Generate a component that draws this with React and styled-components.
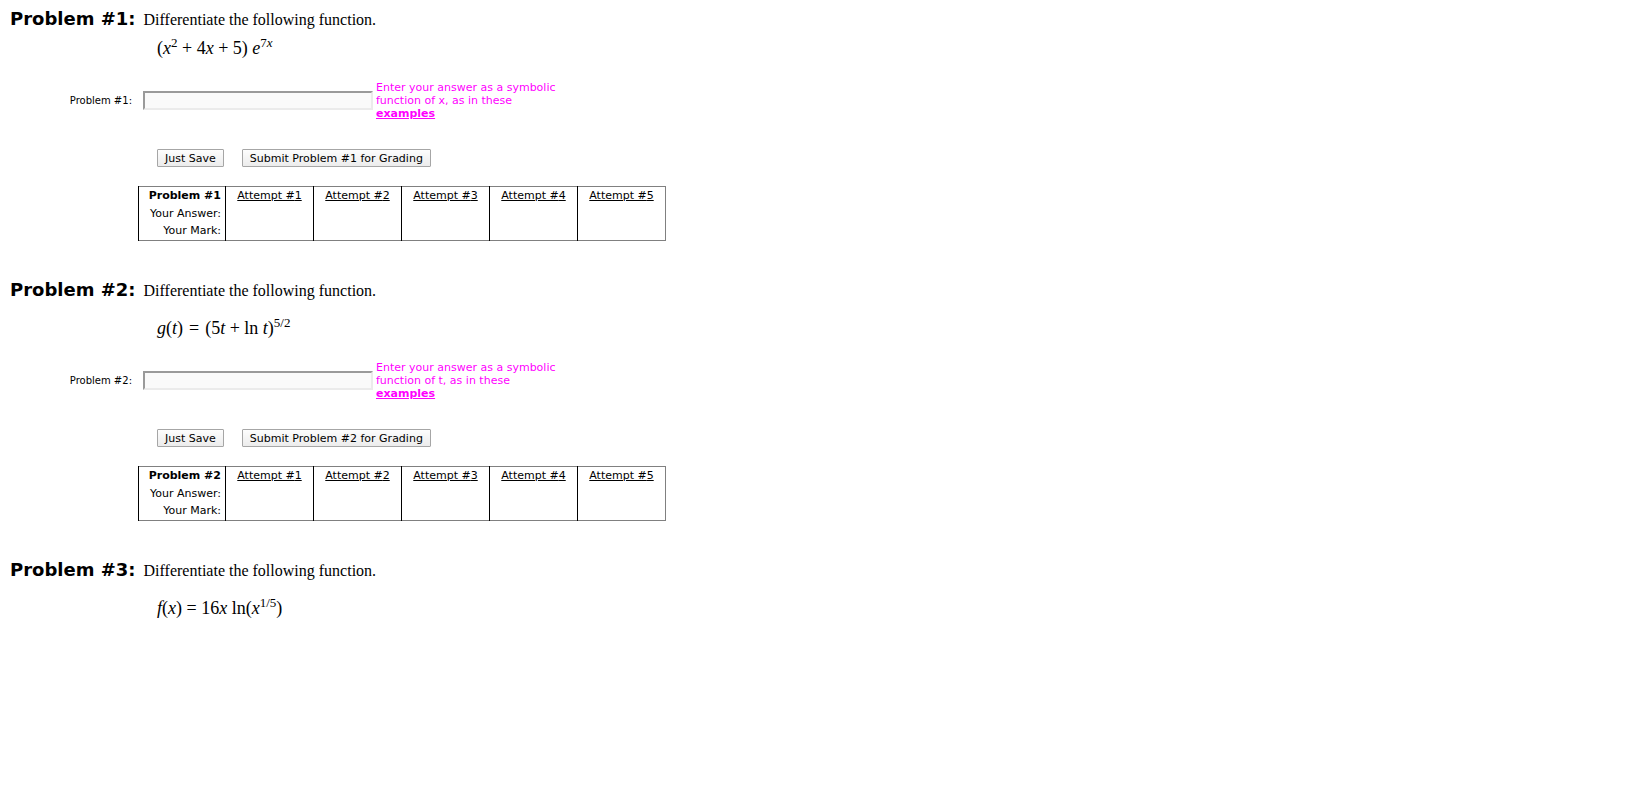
import React from 'react';
import styled, { createGlobalStyle } from 'styled-components';

const GlobalStyle = createGlobalStyle`
  body {
    margin: 0;
    background: #fff;
    color: #000;
    font-family: "DejaVu Sans", Verdana, sans-serif;
  }
`;

const Page = styled.div`
  padding-top: 8px;
`;

const Section = styled.section`
  margin-bottom: 38.5px;
`;

const Heading = styled.div`
  padding-left: 10px;
  height: 22px;
  line-height: 22px;
  white-space: nowrap;
`;

const Number = styled.b`
  font-family: "DejaVu Sans", Verdana, sans-serif;
  font-size: 18px;
  font-weight: bold;
`;

const Statement = styled.span`
  font-family: "Liberation Serif", "Times New Roman", serif;
  font-size: 16px;
  margin-left: 8px;
`;

const MathLine = styled.div`
  margin-top: ${(p) => p.$gap}px;
  padding-left: 157px;
  height: 22px;
  line-height: 22px;
  font-family: "Liberation Serif", "Times New Roman", serif;
  font-size: 18px;
  white-space: nowrap;

  i {
    font-style: italic;
  }

  sup {
    font-size: 13px;
    line-height: 0;
    vertical-align: 7px;
  }
`;

const Eq = styled.span`
  margin: 0 6px;
`;

const AnswerRow = styled.div`
  margin-top: 21px;
  display: flex;
  align-items: center;
  height: 40px;
`;

const Label = styled.label`
  width: 143px;
  padding-right: 11px;
  box-sizing: border-box;
  text-align: right;
  font-size: 10px;
`;

const AnswerInput = styled.input`
  width: 230px;
  height: 19px;
  box-sizing: border-box;
  margin: 0;
  padding: 0 3px;
  border: 2px solid #ebebeb;
  border-top-color: #9a9a9a;
  border-left-color: #9a9a9a;
  background: #fafafa;
  font-size: 11px;
`;

const Hint = styled.div`
  margin-left: 3px;
  width: 186px;
  color: #ff00ff;
  font-size: 11px;
  line-height: 13px;

  a {
    color: #ff00ff;
    font-weight: bold;
    text-decoration: underline;
  }
`;

const ButtonRow = styled.div`
  margin-top: 29px;
  padding-left: 157px;
  display: flex;
  gap: 18px;
`;

const Button = styled.button`
  height: 18px;
  margin: 0;
  padding: 0 7px;
  font-family: "DejaVu Sans", Verdana, sans-serif;
  font-size: 11px;
  line-height: 1;
  color: #000;
  background: linear-gradient(#fdfdfd, #ececec);
  border: 1px solid #a6a6a6;
  border-radius: 1px;
`;

const AttemptTable = styled.table`
  margin: 19px 0 0 138px;
  border-collapse: collapse;
  border: 1px solid #808080;
  font-size: 11px;

  td,
  th {
    height: 17.5px;
    padding: 0 4px;
    border-left: 1px solid #000;
    vertical-align: middle;
  }
`;

const RowHead = styled.th`
  width: 78px;
  text-align: right;
  font-weight: ${(p) => (p.$bold ? 'bold' : 'normal')};
  white-space: nowrap;
`;

const AttemptCell = styled.td`
  width: 79px;
  text-align: center;

  && {
    vertical-align: top;
    padding-top: 2px;
  }

  a {
    color: #000;
    text-decoration: underline;
  }
`;

const problems = [
  {
    id: 1,
    gap: 7,
    variable: 'x',
    math: (
      <>
        (<i>x</i><sup>2</sup> + 4<i>x</i> + 5) <i>e</i><sup>7<i>x</i></sup>
      </>
    ),
  },
  {
    id: 2,
    gap: 16,
    variable: 't',
    math: (
      <>
        <i>g</i>(<i>t</i>)<Eq>=</Eq>(5<i>t</i> + ln <i>t</i>)<sup>5/2</sup>
      </>
    ),
  },
  {
    id: 3,
    gap: 16,
    math: (
      <>
        <i>f</i>(<i>x</i>) = 16<i>x</i> ln(<i>x</i><sup>1/5</sup>)
      </>
    ),
  },
];

const attempts = [1, 2, 3, 4, 5];

const Problem = ({ problem }) => (
  <Section>
    <Heading>
      <Number>Problem #{problem.id}:</Number>
      <Statement>Differentiate the following function.</Statement>
    </Heading>
    <MathLine $gap={problem.gap}>{problem.math}</MathLine>

    {problem.variable && (
      <>
        <AnswerRow>
          <Label>Problem #{problem.id}:</Label>
          <AnswerInput type="text" />
          <Hint>
            Enter your answer as a symbolic function of {problem.variable}, as in these{' '}
            <a href="#examples">examples</a>
          </Hint>
        </AnswerRow>

        <ButtonRow>
          <Button type="button">Just Save</Button>
          <Button type="button">Submit Problem #{problem.id} for Grading</Button>
        </ButtonRow>

        <AttemptTable>
          <tbody>
            <tr>
              <RowHead $bold>Problem #{problem.id}</RowHead>
              {attempts.map((n) => (
                <AttemptCell key={n} rowSpan={3}>
                  <a href={`#attempt${n}`}>Attempt #{n}</a>
                </AttemptCell>
              ))}
            </tr>
            <tr>
              <RowHead>Your Answer:</RowHead>
            </tr>
            <tr>
              <RowHead>Your Mark:</RowHead>
            </tr>
          </tbody>
        </AttemptTable>
      </>
    )}
  </Section>
);

const App = () => (
  <>
    <GlobalStyle />
    <Page>
      {problems.map((p) => (
        <Problem key={p.id} problem={p} />
      ))}
    </Page>
  </>
);

export default App;
